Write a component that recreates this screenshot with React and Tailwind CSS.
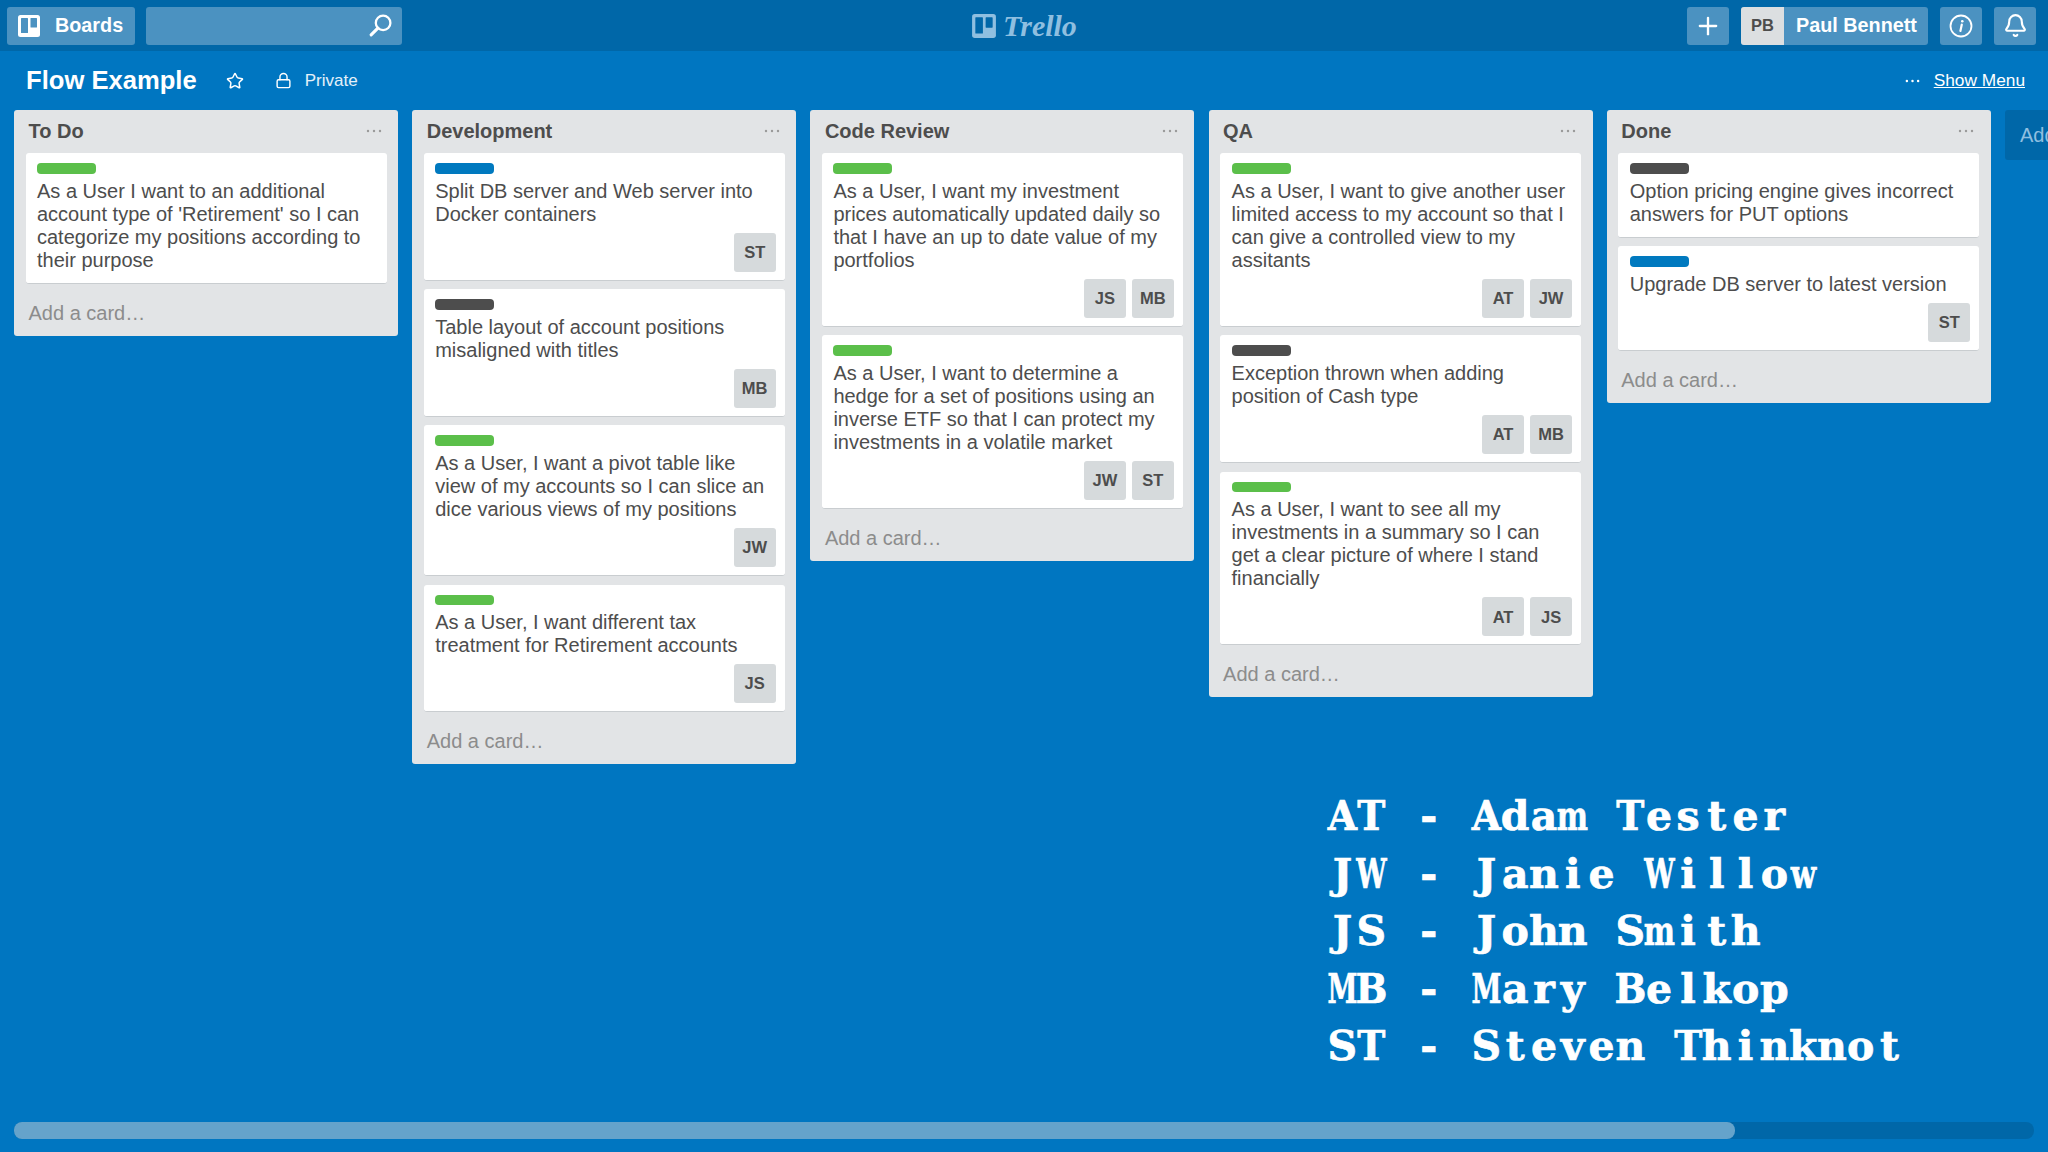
import React from "react";
import { Plus, Bell, Star, Lock } from "lucide-react";

const GREEN = "bg-[#5bbf4a]";
const BLUE = "bg-[#0079bf]";
const DARK = "bg-[#4d4d4d]";

const lists = [
  { title: "To Do", cards: [
    { label: GREEN, text: "As a User I want to an additional account type of 'Retirement' so I can categorize my positions according to their purpose", who: [] },
  ]},
  { title: "Development", cards: [
    { label: BLUE, text: "Split DB server and Web server into Docker containers", who: ["ST"] },
    { label: DARK, text: "Table layout of account positions misaligned with titles", who: ["MB"] },
    { label: GREEN, text: "As a User, I want a pivot table like view of my accounts so I can slice an dice various views of my positions", who: ["JW"] },
    { label: GREEN, text: "As a User, I want different tax treatment for Retirement accounts", who: ["JS"] },
  ]},
  { title: "Code Review", cards: [
    { label: GREEN, text: "As a User, I want my investment prices automatically updated daily so that I have an up to date value of my portfolios", who: ["JS", "MB"] },
    { label: GREEN, text: "As a User, I want to determine a hedge for a set of positions using an inverse ETF so that I can protect my investments in a volatile market", who: ["JW", "ST"] },
  ]},
  { title: "QA", cards: [
    { label: GREEN, text: "As a User, I want to give another user limited access to my account so that I can give a controlled view to my assitants", who: ["AT", "JW"] },
    { label: DARK, text: "Exception thrown when adding position of Cash type", who: ["AT", "MB"] },
    { label: GREEN, text: "As a User, I want to see all my investments in a summary so I can get a clear picture of where I stand financially", who: ["AT", "JS"] },
  ]},
  { title: "Done", cards: [
    { label: DARK, text: "Option pricing engine gives incorrect answers for PUT options", who: [] },
    { label: BLUE, text: "Upgrade DB server to latest version", who: ["ST"] },
  ]},
];

const legend = [
  "AT - Adam Tester",
  "JW - Janie Willow",
  "JS - John Smith",
  "MB - Mary Belkop",
  "ST - Steven Thinknot",
];

function cellScale(ch) {
  if ("MW".includes(ch)) return "scale-x-[0.66]";
  if ("mw".includes(ch)) return "scale-x-[0.72]";
  if ("ABDEFHKNOPRTVXYZ".includes(ch)) return "scale-x-[0.92]";
  return "";
}

function Cell({ ch }) {
  return (
    <span className={`inline-block w-[28.8px] text-center ${cellScale(ch)}`}>
      <span className="inline-block -mx-[12px]">{ch === " " ? "\u00a0" : ch}</span>
    </span>
  );
}

function BoardGlyph({ className, fg, bg }) {
  return (
    <svg viewBox="0 0 24 24" className={className}>
      <rect x="1" y="1" width="22" height="22" rx="2.5" fill={fg} />
      <rect x="4" y="4" width="7" height="15" rx="0.5" fill={bg} />
      <rect x="13.5" y="4" width="6.5" height="9.5" rx="0.5" fill={bg} />
    </svg>
  );
}

function Card({ card }) {
  return (
    <div className="bg-white rounded-[3px] border-b border-b-[#c9cdd0] pl-[11.5px] pr-[10.5px] pt-[10px] pb-[8px]">
      <div className={`h-[10.5px] w-[59px] rounded-[4px] ${card.label}`} />
      <p className="mt-[6px] text-[20px] leading-[23.1px] text-[#4d4d4d]">{card.text}</p>
      {card.who.length > 0 ? (
        <div className="flex justify-end gap-[6px] mt-[7px] -mr-[1.5px]">
          {card.who.map((w) => (
            <span key={w} className="w-[42px] h-[39px] rounded-[3px] bg-[#d6dadc] flex items-center justify-center text-[16.5px] font-bold text-[#4d4d4d]">{w}</span>
          ))}
        </div>
      ) : <div className="h-[3px]" />}
    </div>
  );
}

function List({ list }) {
  return (
    <div className="w-[384px] shrink-0 self-start bg-[#e2e4e6] rounded-[3px] px-[11.5px]">
      <div className="h-[43px] flex items-center justify-between pl-[3px] pr-[5px] pb-[2px]">
        <h2 className="text-[20px] font-bold text-[#4d4d4d]">{list.title}</h2>
        <svg viewBox="0 0 16 4" className="w-[16px] h-[4px]">
          <circle cx="2" cy="2" r="1.2" fill="#999" />
          <circle cx="8" cy="2" r="1.2" fill="#999" />
          <circle cx="14" cy="2" r="1.2" fill="#999" />
        </svg>
      </div>
      <div className="flex flex-col gap-[8.5px]">
        {list.cards.map((c, i) => <Card key={i} card={c} />)}
      </div>
      <div className="h-[52px] flex items-center pl-[3px] pt-[6px] text-[20px] text-[#8c8c8c]">Add a card…</div>
    </div>
  );
}

export default function App() {
  return (
    <div className="relative w-[2048px] h-[1152px] overflow-hidden flex flex-col bg-[#0076c1] font-['Liberation_Sans',Arial,sans-serif]">
      <header className="h-[51px] shrink-0 bg-[#0067a8] flex items-center pl-[7px] pr-[12px]">
        <div className="w-[128px] h-[38px] rounded-[3px] bg-[#4b92c1] flex items-center pl-[10px] gap-[14px]">
          <BoardGlyph className="w-[24px] h-[24px]" fg="#ffffff" bg="#4b92c1" />
          <span className="text-[19.8px] font-bold text-white">Boards</span>
        </div>
        <div className="ml-[11px] w-[256px] h-[38px] rounded-[3px] bg-[#4b92c1] flex items-center justify-end pr-[9px]">
          <svg viewBox="0 0 24 24" className="w-[25px] h-[25px]" fill="none" stroke="#fff" strokeWidth="2.2" strokeLinecap="round">
            <circle cx="14.5" cy="9.5" r="7" />
            <path d="M9.5 14.5 L3 21" strokeWidth="3" />
          </svg>
        </div>
        <div className="ml-[569px] flex items-center gap-[6px] w-[110px]">
          <BoardGlyph className="w-[26px] h-[26px]" fg="#8fbfe0" bg="#0067a8" />
          <span className="text-[30px] leading-none italic font-bold text-[#8fbfe0] font-['Liberation_Serif',serif]">Trello</span>
        </div>
        <div className="ml-auto flex items-center gap-[12px]">
          <div className="w-[42px] h-[38px] rounded-[3px] bg-[#4b92c1] flex items-center justify-center">
            <Plus className="w-[28px] h-[28px] text-white" strokeWidth={2} />
          </div>
          <div className="w-[187px] h-[38px] rounded-[3px] bg-[#4b92c1] flex items-center overflow-hidden">
            <span className="w-[43px] h-full bg-[#dcdfe1] flex items-center justify-center text-[16.5px] font-bold text-[#4d4d4d]">PB</span>
            <span className="ml-[12px] text-[19.8px] font-bold text-white whitespace-nowrap">Paul Bennett</span>
          </div>
          <div className="w-[42px] h-[38px] rounded-[3px] bg-[#4b92c1] flex items-center justify-center">
            <svg viewBox="0 0 24 24" className="w-[24px] h-[24px]" fill="none" stroke="#fff" strokeWidth="1.8">
              <circle cx="12" cy="12" r="10.5" />
              <path d="M12.8 10.5 L11.4 17" strokeWidth="2.2" strokeLinecap="round" />
              <circle cx="13.3" cy="7.2" r="1.3" fill="#fff" stroke="none" />
            </svg>
          </div>
          <div className="w-[42px] h-[38px] rounded-[3px] bg-[#4b92c1] flex items-center justify-center">
            <Bell className="w-[25px] h-[25px] text-white" strokeWidth={2} />
          </div>
        </div>
      </header>

      <div className="h-[59px] shrink-0 flex items-center pl-[26px] pr-[23px] text-white">
        <h1 className="text-[25.6px] font-bold">Flow Example</h1>
        <Star className="ml-[29px] w-[18px] h-[18px]" strokeWidth={2} />
        <Lock className="ml-[31px] w-[17px] h-[17px]" strokeWidth={2} />
        <span className="ml-[13px] text-[17px] text-white/90">Private</span>
        <svg viewBox="0 0 16 4" className="ml-auto w-[15px] h-[4px]">
          <circle cx="2" cy="2" r="1.3" fill="#fff" />
          <circle cx="8" cy="2" r="1.3" fill="#fff" />
          <circle cx="14" cy="2" r="1.3" fill="#fff" />
        </svg>
        <span className="ml-[14px] text-[17.3px] underline">Show Menu</span>
      </div>

      <main className="flex-1 min-h-0 flex gap-[14.2px] pl-[14px]">
        {lists.map((l) => <List key={l.title} list={l} />)}
        <div className="w-[200px] h-[50px] shrink-0 rounded-[3px] bg-[#0067a8] flex items-center pl-[15px] text-[20px] text-[#8fbfe0]">Add a list…</div>
      </main>

      <div className="shrink-0 mx-[14px] h-[17px] mb-[13px] rounded-[8px] bg-[#0067a8]">
        <div className="h-full w-[1721px] rounded-[8px] bg-[#65a3cb]" />
      </div>

      <div className="absolute left-[1328px] top-[788px] font-['DejaVu_Serif',serif] font-bold text-[41px] leading-[57.5px] text-white whitespace-nowrap [-webkit-text-stroke:0.7px_white]">
        {legend.map((l) => (
          <div key={l} aria-label={l}>
            {Array.from(l).map((ch, i) => <Cell key={i} ch={ch} />)}
          </div>
        ))}
      </div>
    </div>
  );
}
